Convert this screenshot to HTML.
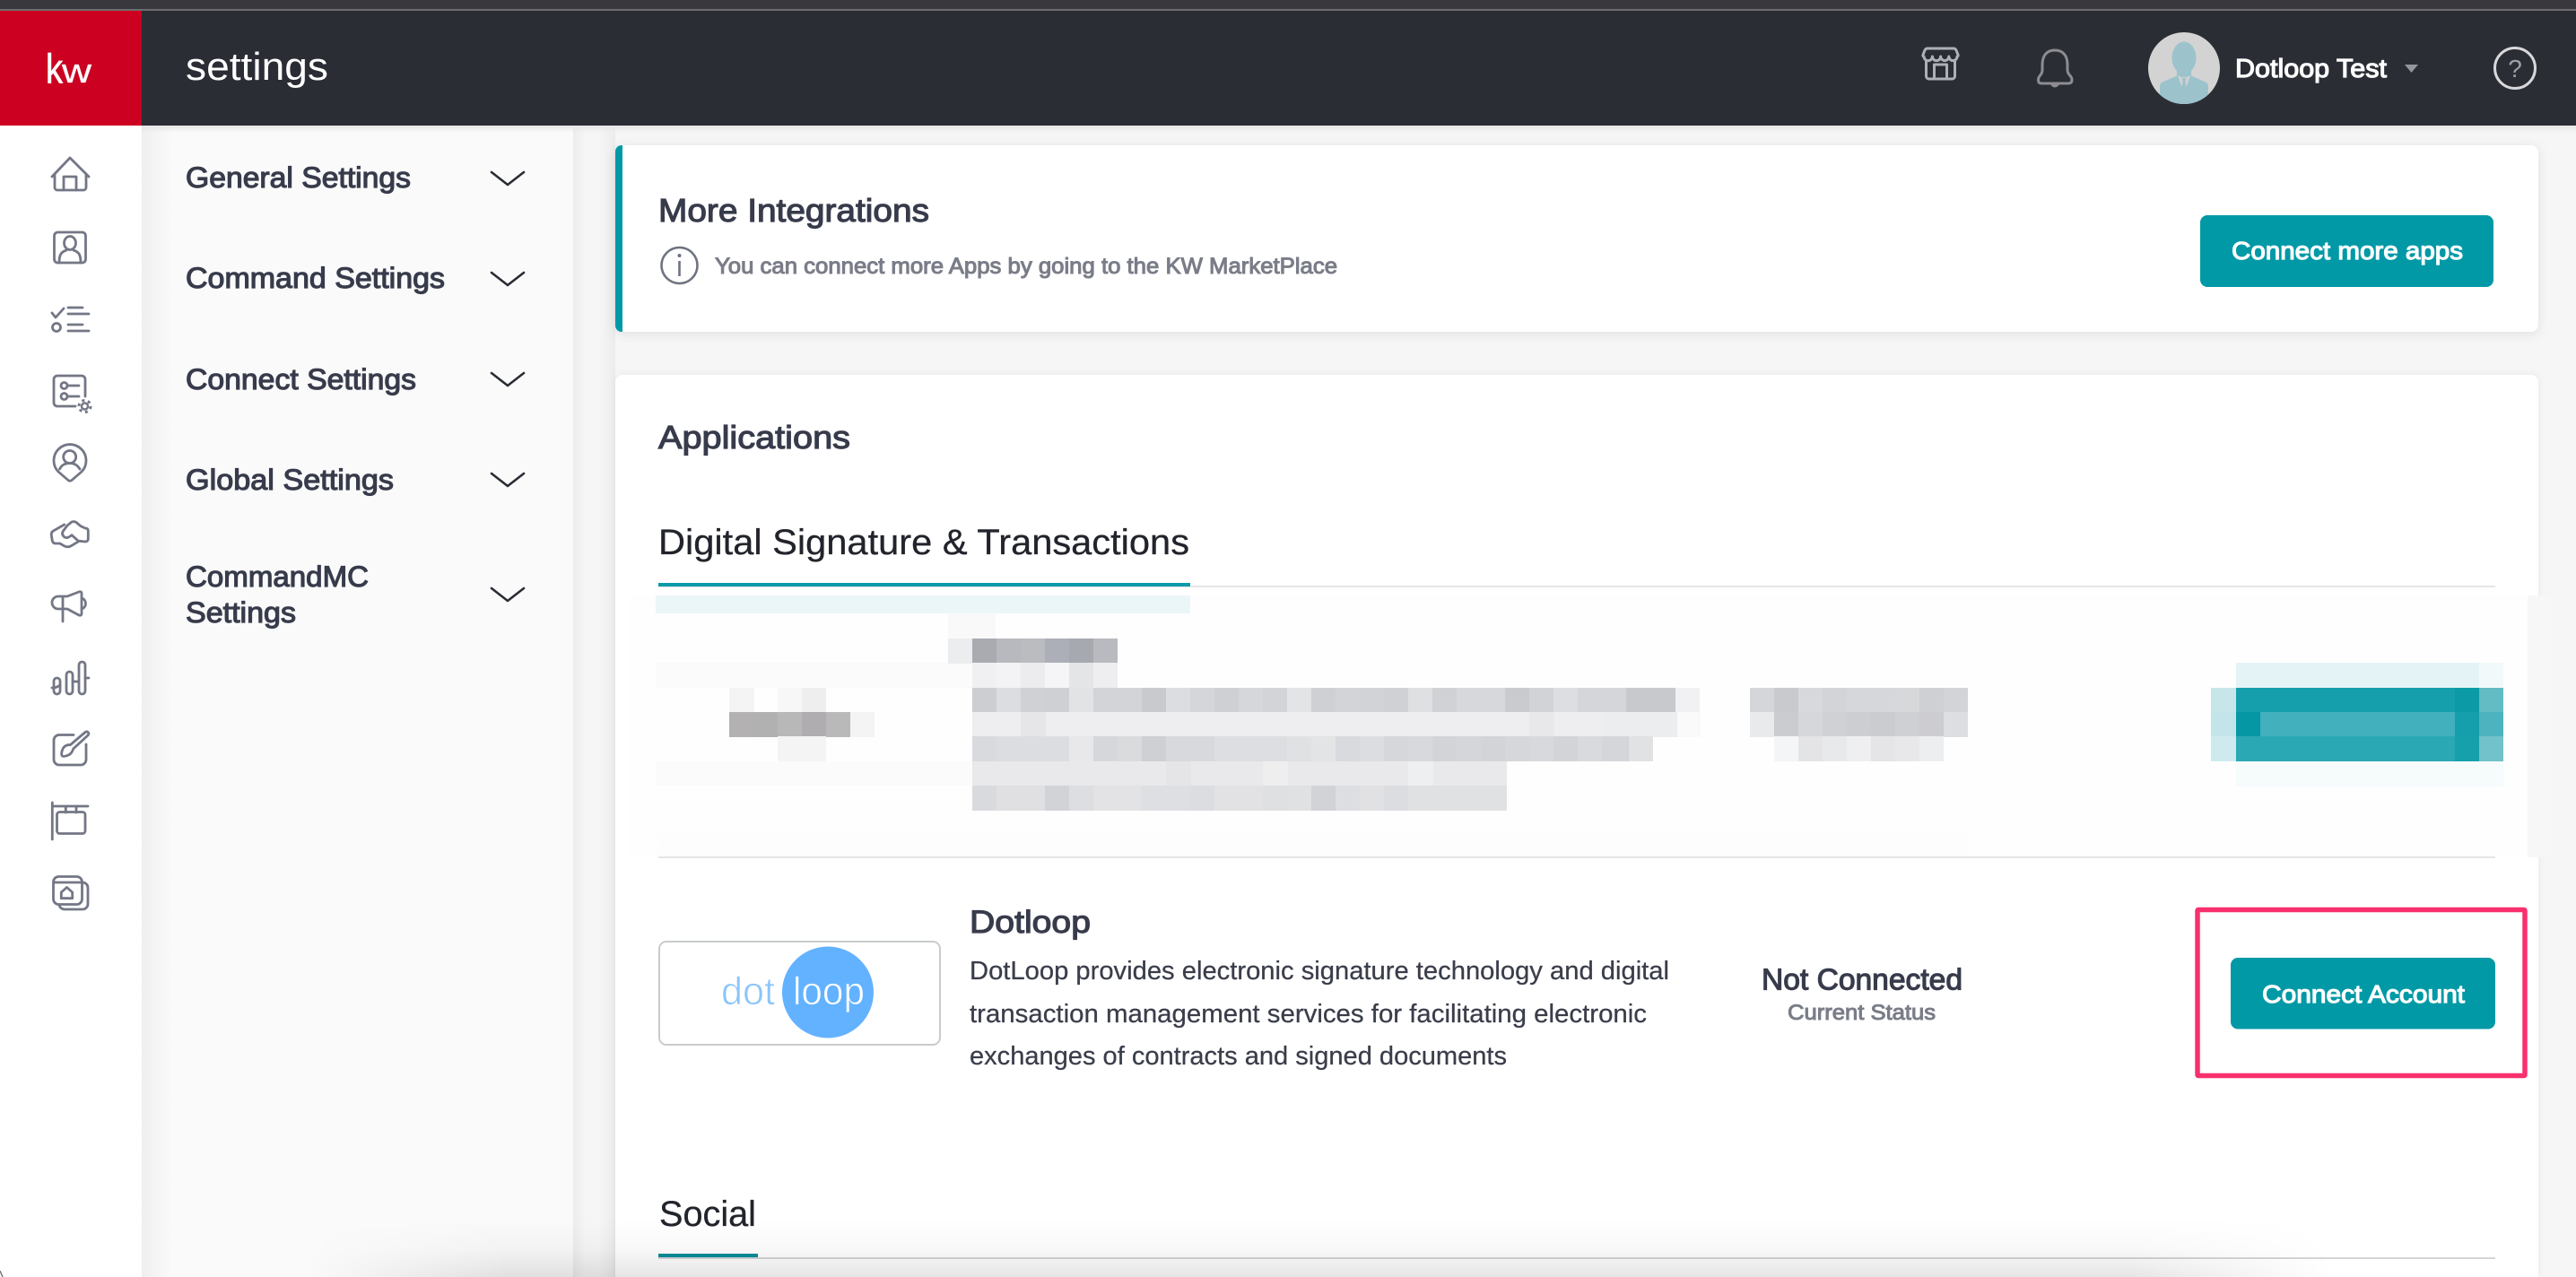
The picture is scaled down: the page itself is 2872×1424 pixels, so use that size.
<!DOCTYPE html>
<html lang="en"><head><meta charset="utf-8"><title>settings</title>
<style>
html,body{margin:0;padding:0;width:2872px;height:1424px;overflow:hidden;background:#f6f6f7}
svg{display:block}
text{font-family:"Liberation Sans",sans-serif}
.s{stroke-width:1.15px}
.ic{fill:none;stroke:#737785;stroke-width:2.8;stroke-linecap:round;stroke-linejoin:round}
.m rect{height:28px;width:28px}
</style></head><body>
<svg width="2872" height="1424" viewBox="0 0 2872 1424" xmlns="http://www.w3.org/2000/svg">
<defs>
<linearGradient id="g1" x1="0" x2="1" y1="0" y2="0"><stop offset="0" stop-color="#efefef"/><stop offset="1" stop-color="#fafafa"/></linearGradient>
<linearGradient id="g2" x1="0" x2="1" y1="0" y2="0"><stop offset="0" stop-color="#ececec"/><stop offset="1" stop-color="#f6f6f7"/></linearGradient>
<linearGradient id="g3" x1="0" x2="1" y1="0" y2="0"><stop offset="0" stop-color="#f6f6f7"/><stop offset="1" stop-color="#ececed"/></linearGradient>
<linearGradient id="g4" x1="0" x2="0" y1="0" y2="1"><stop offset="0" stop-color="#e6e6e6"/><stop offset="1" stop-color="#e6e6e6" stop-opacity="0"/></linearGradient>
<linearGradient id="v" x1="0" x2="0" y1="0" y2="1"><stop offset="0" stop-color="#000" stop-opacity="0"/><stop offset=".5" stop-color="#000" stop-opacity=".025"/><stop offset="1" stop-color="#000" stop-opacity=".1"/></linearGradient>
<linearGradient id="h" x1="0" x2="1" y1="0" y2="0"><stop offset="0" stop-color="#000"/><stop offset=".1" stop-color="#fff"/><stop offset=".9" stop-color="#fff"/><stop offset="1" stop-color="#000"/></linearGradient>
<mask id="mk" maskUnits="userSpaceOnUse" x="340" y="1360" width="2260" height="64"><rect x="340" y="1360" width="2260" height="64" fill="url(#h)"/></mask>
<clipPath id="av"><circle cx="2435" cy="76" r="40"/></clipPath>
</defs>

<!-- backgrounds -->
<rect width="2872" height="1424" fill="#f6f6f7"/>
<rect x="0" y="140" width="158" height="1284" fill="#fff"/>
<rect x="158" y="140" width="481" height="1284" fill="#fafafa"/>
<rect x="158" y="140" width="34" height="1284" fill="url(#g1)"/>
<rect x="639" y="140" width="14" height="1284" fill="url(#g2)"/>
<rect x="668" y="140" width="18" height="1284" fill="url(#g3)"/>
<rect x="158" y="140" width="2714" height="8" fill="url(#g4)"/>

<!-- top chrome and header -->
<rect width="2872" height="10" fill="#39393d"/>
<rect y="10" width="2872" height="2" fill="#6d6d70"/>
<rect y="12" width="2872" height="128" fill="#2b2d35"/>
<rect y="12" width="158" height="128" fill="#cc0020"/>
<text x="51" y="92.500" font-size="46" fill="#fff" stroke="#fff" stroke-width=".7" textLength="19" lengthAdjust="spacingAndGlyphs">k</text>
<text x="69" y="92" font-size="38" fill="#fff" stroke="#fff" stroke-width=".3" textLength="33" lengthAdjust="spacingAndGlyphs">w</text>
<text x="207" y="89" font-size="44" fill="#fff" textLength="159" lengthAdjust="spacingAndGlyphs">settings</text>

<!-- store -->
<g fill="none" stroke="#aeb0b8" stroke-width="3" stroke-linejoin="round" stroke-linecap="round">
<path d="M2149 54H2178Q2180 54 2181 56L2183 61Q2183.500 63 2182 63A4.600 4.600 0 0 1 2172.800 63A4.600 4.600 0 0 1 2163.600 63A4.600 4.600 0 0 1 2154.400 63A4.600 4.600 0 0 1 2145 63Q2143.500 63 2144 61L2146 56Q2147 54 2149 54Z"/>
<path d="M2147.500 68V85A3 3 0 0 0 2150.500 88H2176.500A3 3 0 0 0 2179.500 85V68"/>
<path d="M2156.500 88V72H2170.500V88"/>
</g>
<!-- bell -->
<path d="M2291 56C2282 56 2277 62 2277 72V78C2277 84 2272.500 84 2272.500 89Q2272.500 93 2276 93H2306Q2310 93 2310 89C2310 84 2305 84 2305 78V72C2305 62 2300 56 2291 56Z" fill="none" stroke="#8c8c91" stroke-width="3"/>
<path d="M2286 94H2296Q2294 97.500 2291 97.500Q2288 97.500 2286 94Z" fill="#8c8c91"/>
<!-- avatar -->
<circle cx="2435" cy="76" r="40" fill="#d3d3d3"/>
<g clip-path="url(#av)" fill="#9cc3cb">
<ellipse cx="2435" cy="64.500" rx="13.500" ry="18"/>
<path d="M2427 76H2443V85H2427Z"/>
<path d="M2408 122V96Q2408 92.500 2412 91L2427 84.500H2443L2458 91Q2462 92.500 2462 96V122Z"/>
<path d="M2428 84L2433.500 100H2436.500L2442 84L2438.500 86H2431.500Z" fill="#d3d3d3"/>
<path d="M2432.500 87H2437.500L2436.500 91L2438 99L2435 103L2432 99L2433.500 91Z"/>
</g>
<text x="2492" y="86" font-size="29" fill="#fff" stroke="#fff" class="s" textLength="169" lengthAdjust="spacingAndGlyphs">Dotloop Test</text>
<path d="M2681 72H2696L2688.500 81Z" fill="#96979c"/>
<circle cx="2804" cy="76" r="22.500" fill="none" stroke="#d8d8da" stroke-width="3"/>
<text x="2804" y="86" font-size="28" fill="#a0a0a5" text-anchor="middle">?</text>

<!-- rail icons -->
<g class="ic">
<path d="M58 197L78 176L99 197"/><path d="M61 194V209A3 3 0 0 0 64 212H93A3 3 0 0 0 96 209V194"/><path d="M71 212V197H85V212"/>
<rect x="60.500" y="259" width="35" height="34" rx="4"/><ellipse cx="78" cy="271" rx="6.500" ry="7.500"/><path d="M66 293C66 284 68 281 74 279M90 293C90 284 88 281 82 279"/>
<path d="M58 349L62 354L71 344"/><path d="M76 343H92M76 350H99M76 362H92M76 369H99"/><circle cx="63" cy="365" r="4.500"/>
<path d="M95 442V423A4 4 0 0 0 91 419H64A4 4 0 0 0 60 423V449A4 4 0 0 0 64 453H84"/><circle cx="71.500" cy="430" r="3.500"/><circle cx="71.500" cy="442" r="3.500"/><path d="M75 430H88M75 442H88"/>
<path d="M65 526A18 18 0 1 1 91 526L80 535.500Q78 537 76 535.500Z"/><circle cx="77.700" cy="509.500" r="7"/><path d="M66.500 523C69 518 73 516.500 77.700 516.500C82 516.500 86 518 89 523"/>
<path d="M71.700 585L60 591.700Q57 593 57.300 597L58.300 603Q59 606 62 606H66.700L72 609Q76 611 80 608.300L88.300 603.300L95 604Q98 604 98.300 601V592Q98.300 589 95 589L90 586.700L85 582.500Q83 581 80 582L75 586L70.500 592Q68 596 72 599Q75 601 80 596.700L86.700 602.700"/>
<path d="M75 665L88 660Q91 659 91 662V684Q91 687 88 686L75 679H65A7 7 0 0 1 65 665Z"/><path d="M91.500 667A6.500 6.500 0 0 1 91.500 679"/><path d="M70 666V693"/>
<rect x="60" y="756" width="7" height="18" rx="3.500"/><rect x="74" y="749" width="7" height="25" rx="3.500"/><rect x="88" y="738" width="7" height="36" rx="3.500"/><path d="M58 767C62 767 64 766 67 764M81 760H88M95 756H99"/>
<path d="M82 819.500H66A6 6 0 0 0 60 825.500V847A6 6 0 0 0 66 853H90A6 6 0 0 0 96 847V830"/><path d="M78.300 830.700L95 816.500Q97 815 98.300 816.700Q99.500 818 98 820L81.700 835Q80 841 75 842.500Q71 844 69.500 843Q68 842 69 838Q70 834 72 832.500Q75 830 78.300 830.700Z"/>
<path d="M58.300 895V936M58.300 899H98M73.300 899V906M85 899V906"/><rect x="63.500" y="905.500" width="31.500" height="24" rx="3"/>
<rect x="59.500" y="977.500" width="32" height="31" rx="6"/><path d="M60 984H92A6 6 0 0 1 98 990V1008A6 6 0 0 1 92 1014H72A6 6 0 0 1 66 1009"/><path d="M68.300 995L74.500 989.500L80.700 995V1001.700H68.300Z"/>
</g>
<circle cx="94.500" cy="453" r="3.500" fill="none" stroke="#737785" stroke-width="2.400"/>
<circle cx="94.500" cy="453" r="6.500" fill="none" stroke="#737785" stroke-width="3" stroke-dasharray="3 3.800"/>

<!-- settings nav -->
<g fill="#373b4b" stroke="#373b4b" class="s" font-size="32">
<text x="207" y="209" textLength="251" lengthAdjust="spacingAndGlyphs">General Settings</text>
<text x="207" y="321" textLength="289" lengthAdjust="spacingAndGlyphs">Command Settings</text>
<text x="207" y="434" textLength="257" lengthAdjust="spacingAndGlyphs">Connect Settings</text>
<text x="207" y="546" textLength="232" lengthAdjust="spacingAndGlyphs">Global Settings</text>
<text x="207" y="654" textLength="204" lengthAdjust="spacingAndGlyphs">CommandMC</text>
<text x="207" y="694" textLength="123" lengthAdjust="spacingAndGlyphs">Settings</text>
</g>
<g fill="none" stroke="#2a2c35" stroke-width="2.600" stroke-linecap="round" stroke-linejoin="round">
<path d="M548 192L566 206L584 192"/><path d="M548 304L566 318L584 304"/><path d="M548 416L566 430L584 416"/><path d="M548 528L566 542L584 528"/><path d="M548 656L566 670L584 656"/>
</g>

<!-- More Integrations card -->
<rect x="686" y="162" width="2144" height="208" rx="8" fill="#fff" style="filter:drop-shadow(0 2px 6px rgba(0,0,0,.09))"/>
<path d="M694 162H693A7 7 0 0 0 686 169V363A7 7 0 0 0 693 370H694Z" fill="#0199a6"/>
<text x="734" y="247" font-size="36" fill="#373b4b" stroke="#373b4b" class="s" textLength="302" lengthAdjust="spacingAndGlyphs">More Integrations</text>
<circle cx="757.500" cy="296" r="20" fill="none" stroke="#6f7380" stroke-width="2.600"/>
<circle cx="757.500" cy="285" r="2" fill="#6f7380"/>
<path d="M757.500 291V308" stroke="#6f7380" stroke-width="2.600"/>
<text x="797" y="305" font-size="25" fill="#7a7d88" stroke="#7a7d88" stroke-width="1.050" textLength="694" lengthAdjust="spacingAndGlyphs">You can connect more Apps by going to the KW MarketPlace</text>
<rect x="2453" y="240" width="327" height="80" rx="8" fill="#0199a6"/>
<text x="2488" y="289" font-size="28" fill="#fff" stroke="#fff" class="s" textLength="258" lengthAdjust="spacingAndGlyphs">Connect more apps</text>

<!-- Applications card -->
<path d="M686 426A8 8 0 0 1 694 418H2822A8 8 0 0 1 2830 426V1424H686Z" fill="#fff" style="filter:drop-shadow(0 0 4px rgba(0,0,0,.06))"/>
<text x="734" y="500" font-size="36" fill="#373b4b" stroke="#373b4b" class="s" textLength="214" lengthAdjust="spacingAndGlyphs">Applications</text>
<text x="734" y="618" font-size="40" fill="#22242c" stroke="#22242c" stroke-width=".3" textLength="592" lengthAdjust="spacingAndGlyphs">Digital Signature &amp; Transactions</text>
<rect x="734" y="653" width="2048" height="2" fill="#e5e5e7"/>
<rect x="734" y="650" width="593" height="4" fill="#0a9ba8"/>

<!-- pixelated row -->
<rect x="700" y="664" width="2118" height="292" fill="#fefefe"/>
<rect x="2818" y="664" width="27" height="292" fill="#f8f7f7"/>
<rect x="731" y="664" width="596" height="20" fill="#ebf6f8"/>
<rect x="1057" y="684" width="53" height="28" fill="#f9f9f9"/>
<rect x="731" y="739" width="353" height="28" fill="#fbfbfb"/>
<rect x="731" y="849" width="353" height="27" fill="#fbfbfc"/>
<rect x="734" y="930" width="1460" height="26" fill="#fdfdfd"/>
<g class="m">
<rect x="1057" y="712" fill="#ecedef"/><rect x="1084" y="712" fill="#a9abb1"/><rect x="1111" y="712" fill="#b8b9be"/><rect x="1138" y="712" fill="#babcc0"/><rect x="1165" y="712" fill="#adafb8"/><rect x="1192" y="712" fill="#a6a9b0"/><rect x="1219" y="712" fill="#b9babf" style="width:27px"/>
<rect x="1084" y="739" fill="#f0f0f2"/><rect x="1111" y="739" fill="#f3f3f5"/><rect x="1138" y="739" fill="#ececee"/><rect x="1165" y="739" fill="#f5f5f7"/><rect x="1192" y="739" fill="#e4e5e7"/><rect x="1219" y="739" fill="#eeeef1" style="width:27px"/>
<rect x="813" y="767" fill="#f4f4f4"/><rect x="867" y="767" fill="#f7f7f7"/><rect x="894" y="767" fill="#eeeeee" style="width:27px"/>
<rect x="1084" y="767" fill="#cdced1"/><rect x="1111" y="767" fill="#dcdde0"/><rect x="1138" y="767" fill="#d0d1d4"/><rect x="1165" y="767" fill="#cfd0d4"/><rect x="1192" y="767" fill="#e2e3e5"/><rect x="1219" y="767" fill="#d3d4d8"/><rect x="1246" y="767" fill="#d3d4d8"/><rect x="1273" y="767" fill="#c9cace"/><rect x="1300" y="767" fill="#dcdde0"/><rect x="1327" y="767" fill="#d5d6d9"/><rect x="1354" y="767" fill="#cfd0d4"/><rect x="1381" y="767" fill="#d6d7da"/><rect x="1408" y="767" fill="#d3d4d7"/><rect x="1435" y="767" fill="#e3e4e5"/><rect x="1462" y="767" fill="#cfd0d4"/><rect x="1489" y="767" fill="#d3d4d7"/><rect x="1516" y="767" fill="#d2d3d6"/><rect x="1543" y="767" fill="#d0d1d4"/><rect x="1570" y="767" fill="#dfe0e2"/><rect x="1597" y="767" fill="#d1d2d5"/><rect x="1624" y="767" fill="#d7d8db"/><rect x="1651" y="767" fill="#d7d8db"/><rect x="1678" y="767" fill="#c9cbce"/><rect x="1705" y="767" fill="#d2d3d7"/><rect x="1732" y="767" fill="#dddee1"/><rect x="1759" y="767" fill="#d5d6d9"/><rect x="1786" y="767" fill="#d5d6d9"/><rect x="1813" y="767" fill="#c8c9cd"/><rect x="1840" y="767" fill="#c8c9cd"/><rect x="1868" y="767" fill="#f1f1f3" style="width:27px"/>
<rect x="813" y="794" fill="#b3b1b2"/><rect x="840" y="794" fill="#b1b1b1"/><rect x="867" y="794" fill="#b8b8b8"/><rect x="894" y="794" fill="#afadaf"/><rect x="921" y="794" fill="#b9b9b9"/><rect x="948" y="794" fill="#f4f4f4" style="width:27px"/>
<rect x="1084" y="794" fill="#eeeef0" style="width:786px"/><rect x="1138" y="794" fill="#e6e6e9"/><rect x="1705" y="794" fill="#e8e8ea"/><rect x="1786" y="794" fill="#ecedef" style="width:84px"/><rect x="1870" y="794" fill="#fafafa" style="width:26px"/>
<rect x="867" y="821" fill="#f4f4f4" style="width:54px"/>
<rect x="1084" y="821" fill="#d9dade"/><rect x="1111" y="821" fill="#dcdde1" style="width:108px"/><rect x="1192" y="821" fill="#e8e8ea"/><rect x="1219" y="821" fill="#d6d7da"/><rect x="1246" y="821" fill="#dadbdd"/><rect x="1273" y="821" fill="#cfd0d4"/><rect x="1300" y="821" fill="#d8d9dd" style="width:54px"/><rect x="1354" y="821" fill="#dddee1" style="width:81px"/><rect x="1435" y="821" fill="#e0e1e3" style="width:54px"/><rect x="1462" y="821" fill="#e3e4e5"/><rect x="1489" y="821" fill="#d9dade"/><rect x="1516" y="821" fill="#dcdde0"/><rect x="1543" y="821" fill="#d6d7db"/><rect x="1570" y="821" fill="#d8d9dc"/><rect x="1597" y="821" fill="#d3d4d8"/><rect x="1624" y="821" fill="#d5d6d9"/><rect x="1651" y="821" fill="#d3d4d8"/><rect x="1678" y="821" fill="#d6d7da"/><rect x="1705" y="821" fill="#d8d9dc"/><rect x="1732" y="821" fill="#d3d4d8" style="width:84px"/><rect x="1759" y="821" fill="#d9dadd"/><rect x="1786" y="821" fill="#d5d6da"/><rect x="1816" y="821" fill="#e1e2e4" style="width:27px"/>
<rect x="1084" y="849" fill="#e9e9eb" style="width:596px"/><rect x="1300" y="849" fill="#e5e5e7"/><rect x="1408" y="849" fill="#eeeeee"/><rect x="1570" y="849" fill="#eeeff1"/>
<rect x="1084" y="876" fill="#d9dadd"/><rect x="1111" y="876" fill="#e0e0e3" style="width:54px"/><rect x="1165" y="876" fill="#d2d3d7"/><rect x="1192" y="876" fill="#dddee1"/><rect x="1219" y="876" fill="#e3e3e5" style="width:54px"/><rect x="1273" y="876" fill="#dedfe2" style="width:54px"/><rect x="1327" y="876" fill="#dcdde1"/><rect x="1354" y="876" fill="#e2e2e4" style="width:54px"/><rect x="1408" y="876" fill="#dfe0e2"/><rect x="1435" y="876" fill="#e0e1e3"/><rect x="1462" y="876" fill="#d2d3d7"/><rect x="1489" y="876" fill="#dddee1"/><rect x="1516" y="876" fill="#e1e1e4"/><rect x="1543" y="876" fill="#dcdde0"/><rect x="1570" y="876" fill="#e0e1e3" style="width:110px"/>
<!-- status block -->
<rect x="1951" y="767" fill="#d5d6d9"/><rect x="1978" y="767" fill="#c9cacd"/><rect x="2005" y="767" fill="#d8d9dc"/><rect x="2032" y="767" fill="#d3d4d7"/><rect x="2059" y="767" fill="#d6d7da"/><rect x="2086" y="767" fill="#d6d7da"/><rect x="2113" y="767" fill="#d7d8da"/><rect x="2140" y="767" fill="#cfd0d4"/><rect x="2167" y="767" fill="#d3d4d7" style="width:27px"/>
<rect x="1951" y="794" fill="#e9eaec"/><rect x="1978" y="794" fill="#cbcccf"/><rect x="2005" y="794" fill="#d6d7da"/><rect x="2032" y="794" fill="#d0d1d5"/><rect x="2059" y="794" fill="#cdced2"/><rect x="2086" y="794" fill="#cbccd0"/><rect x="2113" y="794" fill="#cfd0d3"/><rect x="2140" y="794" fill="#cdcdd1"/><rect x="2167" y="794" fill="#dddee1" style="width:27px"/>
<rect x="1978" y="821" fill="#f4f5f6"/><rect x="2005" y="821" fill="#e4e4e7"/><rect x="2032" y="821" fill="#e8e9eb"/><rect x="2059" y="821" fill="#efeff1"/><rect x="2086" y="821" fill="#e5e5e8"/><rect x="2113" y="821" fill="#e8e8ea"/><rect x="2140" y="821" fill="#edeef0" style="width:27px"/>
<!-- teal button block -->
<rect x="2493" y="739" fill="#e4f4f6" style="width:271px"/><rect x="2764" y="739" fill="#f2f9fa" style="width:27px"/>
<rect x="2465" y="767" fill="#c6e6ea"/><rect x="2493" y="767" fill="#159fac" style="width:244px"/><rect x="2737" y="767" fill="#0c9aa7"/><rect x="2764" y="767" fill="#63bbc3" style="width:27px"/>
<rect x="2465" y="794" fill="#c3e4e8"/><rect x="2493" y="794" fill="#0697a5"/><rect x="2520" y="794" fill="#43b0bd" style="width:217px"/><rect x="2737" y="794" fill="#159fac"/><rect x="2764" y="794" fill="#4cb3bf" style="width:27px"/>
<rect x="2465" y="821" fill="#cfeaee"/><rect x="2493" y="821" fill="#2aa8b4" style="width:244px"/><rect x="2737" y="821" fill="#15a0ac"/><rect x="2764" y="821" fill="#71c2ca" style="width:27px"/>
<rect x="2493" y="849" fill="#f6fbfc" style="width:298px"/>
</g>
<rect x="734" y="955" width="2048" height="2" fill="#e5e5e7"/>

<!-- Dotloop row -->
<rect x="735" y="1050" width="313" height="115" rx="8" fill="#fff" stroke="#c9cbce" stroke-width="2"/>
<circle cx="923" cy="1106.500" r="51" fill="#63b2ff"/>
<text x="804" y="1120" font-size="44" fill="#8cc5fa" stroke="#fff" stroke-width=".8" textLength="60" lengthAdjust="spacingAndGlyphs">dot</text>
<text x="884" y="1120" font-size="44" fill="#fff" stroke="#63b2ff" stroke-width=".8" textLength="80" lengthAdjust="spacingAndGlyphs">loop</text>
<text x="1081" y="1040" font-size="35" fill="#373b4b" stroke="#373b4b" class="s" textLength="135" lengthAdjust="spacingAndGlyphs">Dotloop</text>
<g font-size="28.500" fill="#3a3d4a" stroke="#3a3d4a" stroke-width=".25">
<text x="1081" y="1092" textLength="780" lengthAdjust="spacingAndGlyphs">DotLoop provides electronic signature technology and digital</text>
<text x="1081" y="1140" textLength="755" lengthAdjust="spacingAndGlyphs">transaction management services for facilitating electronic</text>
<text x="1081" y="1187" textLength="599" lengthAdjust="spacingAndGlyphs">exchanges of contracts and signed documents</text>
</g>
<text x="1964" y="1103.500" font-size="33" fill="#373b4b" stroke="#373b4b" class="s" textLength="224" lengthAdjust="spacingAndGlyphs">Not Connected</text>
<text x="1993" y="1137" font-size="24" fill="#7a7d88" stroke="#7a7d88" stroke-width="1" textLength="165" lengthAdjust="spacingAndGlyphs">Current Status</text>
<rect x="2487" y="1068" width="295" height="79.500" rx="8" fill="#0199a6"/>
<text x="2522" y="1118" font-size="28" fill="#fff" stroke="#fff" class="s" textLength="226" lengthAdjust="spacingAndGlyphs">Connect Account</text>
<rect x="2450" y="1014.500" width="365" height="185" rx="1" fill="none" stroke="#f8306e" stroke-width="5.500"/>

<!-- Social -->
<text x="735" y="1367" font-size="40" fill="#22242c" stroke="#22242c" stroke-width=".3" textLength="108" lengthAdjust="spacingAndGlyphs">Social</text>
<rect x="734" y="1402" width="2048" height="2" fill="#d5d5d7"/>
<rect x="734" y="1398" width="111" height="4" fill="#078e9a"/>

<!-- soft shadow along bottom edge -->
<rect x="340" y="1360" width="2260" height="64" fill="url(#v)" mask="url(#mk)"/>
<path d="M0 1417L3 1424" stroke="#777" stroke-width="1.500" fill="none"/>
</svg>
</body></html>
